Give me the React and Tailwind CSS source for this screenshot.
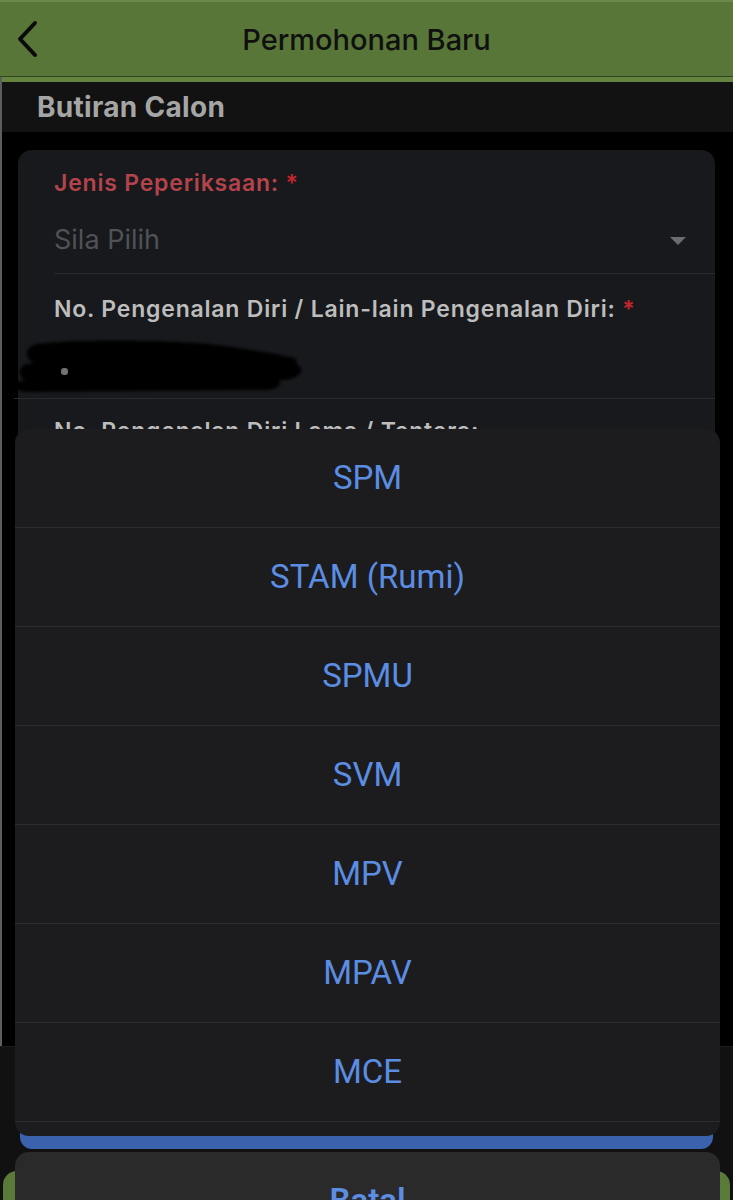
const OPTIONS = ['SPM', 'STAM (Rumi)', 'SPMU', 'SVM', 'MPV', 'MPAV', 'MCE'];

function Redaction() {
  return (
    <svg width="290" height="56" viewBox="0 0 290 56" className="block">
      <defs>
        <filter id="soft" x="-10%" y="-40%" width="120%" height="180%">
          <feGaussianBlur stdDeviation="1.6" />
        </filter>
      </defs>
      <g fill="#050505" filter="url(#soft)">
        <path d="M22 6 C70 0 170 2 212 8 C240 12 250 14 262 16 L280 20 C286 24 284 30 270 30 L30 28 C10 26 8 10 22 6 Z" />
        <path d="M12 26 C60 20 200 22 282 26 C292 30 288 40 270 42 L20 46 C4 44 2 30 12 26 Z" />
        <path d="M2 44 C40 38 140 38 262 40 C270 44 266 52 250 52 L12 54 C-2 52 -4 46 2 44 Z" />
      </g>
      <rect x="47" y="30" width="7" height="7" rx="3" fill="#d0d0d0" opacity="0.55" />
    </svg>
  );
}

export default function App() {
  return (
    <div className="relative h-[1200px] w-[733px] overflow-hidden bg-black" style={{ fontFamily: 'Inter, Roboto, sans-serif' }}>
      <div className="absolute left-0 top-0 bottom-0 w-[2px] bg-[#5e5e5e]" />

      {/* page */}
      <header className="h-[77px] bg-[#587637] border-t-2 border-[#6a8a48] border-b border-b-[#2f4420] flex items-center relative">
        <svg width="26" height="40" viewBox="0 0 26 40" className="ml-[14px]">
          <path d="M21 4 L6 20 L21 36" fill="none" stroke="#0a0a0a" strokeWidth="4" strokeLinecap="round" strokeLinejoin="round" />
        </svg>
        <h1 className="absolute inset-x-0 text-center text-[29px] font-medium text-[#101010] leading-none pointer-events-none">
          Permohonan Baru
        </h1>
      </header>
      <div className="h-[5px] bg-[#64843f]" />
      <div className="h-[50px] bg-[#121212] flex items-center pl-[37px]">
        <span className="text-[28px] font-bold text-[#a5a5a5] leading-none tracking-[0.3px]">Butiran Calon</span>
      </div>

      <div className="px-[18px] pt-[18px]">
        <div className="bg-[#17191c] rounded-[14px] pl-[36px] h-[880px]">
          <div className="pt-[22px] text-[23px] font-semibold text-[#b4434b] leading-none tracking-[0.8px]">
            Jenis Peperiksaan: <span className="text-[#c3262c]">*</span>
          </div>
          <div className="flex items-center justify-between h-[79px] pt-[13px] pr-[28px] border-b border-[#292b2f]">
            <span className="text-[27px] text-[#4f5256]">Sila Pilih</span>
            <svg width="18" height="10" viewBox="0 0 18 10">
              <path d="M1 1 L17 1 L9 9 Z" fill="#6c6c6e" />
            </svg>
          </div>
          <div className="pt-[24px] text-[23px] font-semibold text-[#bdbdbd] leading-none tracking-[0.8px]">
            No. Pengenalan Diri / Lain-lain Pengenalan Diri: <span className="text-[#c3262c]">*</span>
          </div>
          <div className="h-[78px] border-b border-[#292b2f] pt-[17px] -ml-[40px]">
            <Redaction />
          </div>
          <div className="pt-[21px] text-[23px] font-semibold text-[#bdbdbd] leading-none tracking-[0.8px]">
            No. Pengenalan Diri Lama / Tentera:
          </div>
        </div>
      </div>

      <div className="absolute left-0 right-0 top-[1046px] bottom-0 bg-[#111111] border-t border-[#1e1e1e]">
        <div className="mx-[20px] mt-[40px] h-[62px] rounded-[12px] bg-[#3a62ad]" />
        <div className="mx-[3px] mt-[22px] h-[80px] rounded-[14px] bg-[#5a7a3a]" />
      </div>

      {/* action sheet */}
      <div
        className="absolute left-[15px] right-[13px] top-[429px] h-[707px] overflow-hidden rounded-[14px] bg-[#1c1c1e]"
        style={{ fontFamily: 'Roboto, "Noto Sans", sans-serif' }}
      >
        {OPTIONS.map((o) => (
          <div key={o} className="h-[99px] flex items-center justify-center border-b border-[#2c2c2e] text-[33px] text-[#5b8de3]">
            {o}
          </div>
        ))}
      </div>
      <div
        className="absolute left-[15px] right-[13px] top-[1152px] h-[96px] rounded-[14px] bg-[#2a2a2b] flex items-center justify-center"
        style={{ fontFamily: 'Roboto, "Noto Sans", sans-serif' }}
      >
        <span className="text-[33px] font-semibold text-[#5b8de3] leading-none">Batal</span>
      </div>
    </div>
  );
}
